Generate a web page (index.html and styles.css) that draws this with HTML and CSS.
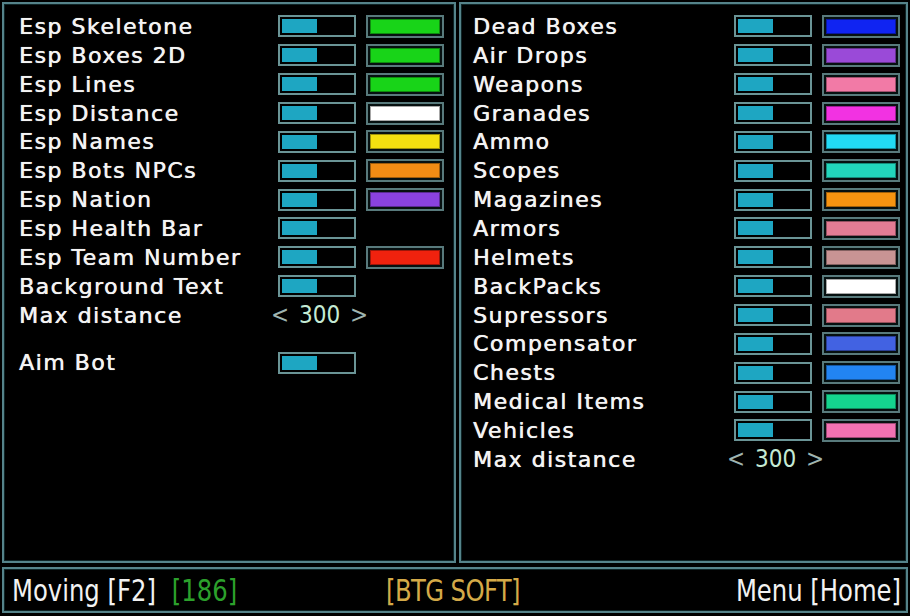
FILE: index.html
```html
<!DOCTYPE html>
<html>
<head>
<meta charset="utf-8">
<link rel="stylesheet" href="styles.css">
</head>
<body>
<div class="menu">
  <div class="panels">
    <section class="panel panel-left">
      <div class="row"><span class="label">Esp Skeletone</span><span class="toggle"><i></i></span><span class="swatch"><i style="background:#18d418"></i></span></div>
      <div class="row"><span class="label">Esp Boxes 2D</span><span class="toggle"><i></i></span><span class="swatch"><i style="background:#18d418"></i></span></div>
      <div class="row"><span class="label">Esp Lines</span><span class="toggle"><i></i></span><span class="swatch"><i style="background:#18d418"></i></span></div>
      <div class="row"><span class="label">Esp Distance</span><span class="toggle"><i></i></span><span class="swatch"><i style="background:#ffffff"></i></span></div>
      <div class="row"><span class="label">Esp Names</span><span class="toggle"><i></i></span><span class="swatch"><i style="background:#f2e010"></i></span></div>
      <div class="row"><span class="label">Esp Bots NPCs</span><span class="toggle"><i></i></span><span class="swatch"><i style="background:#f28c14"></i></span></div>
      <div class="row"><span class="label">Esp Nation</span><span class="toggle"><i></i></span><span class="swatch"><i style="background:#8a42e0"></i></span></div>
      <div class="row"><span class="label">Esp Health Bar</span><span class="toggle"><i></i></span></div>
      <div class="row"><span class="label">Esp Team Number</span><span class="toggle"><i></i></span><span class="swatch"><i style="background:#f0220e"></i></span></div>
      <div class="row"><span class="label">Background Text</span><span class="toggle"><i></i></span></div>
      <div class="row"><span class="label">Max distance</span><span class="range"><span class="arrow">&lt;</span> <span class="num">300</span> <span class="arrow">&gt;</span></span></div>
      <div class="spacer"></div>
      <div class="row"><span class="label">Aim Bot</span><span class="toggle"><i></i></span></div>
    </section>
    <section class="panel panel-right">
      <div class="row"><span class="label">Dead Boxes</span><span class="toggle"><i></i></span><span class="swatch"><i style="background:#1024f2"></i></span></div>
      <div class="row"><span class="label">Air Drops</span><span class="toggle"><i></i></span><span class="swatch"><i style="background:#9a4ad8"></i></span></div>
      <div class="row"><span class="label">Weapons</span><span class="toggle"><i></i></span><span class="swatch"><i style="background:#f27aa6"></i></span></div>
      <div class="row"><span class="label">Granades</span><span class="toggle"><i></i></span><span class="swatch"><i style="background:#f232e2"></i></span></div>
      <div class="row"><span class="label">Ammo</span><span class="toggle"><i></i></span><span class="swatch"><i style="background:#22daf4"></i></span></div>
      <div class="row"><span class="label">Scopes</span><span class="toggle"><i></i></span><span class="swatch"><i style="background:#22d6bc"></i></span></div>
      <div class="row"><span class="label">Magazines</span><span class="toggle"><i></i></span><span class="swatch"><i style="background:#f69410"></i></span></div>
      <div class="row"><span class="label">Armors</span><span class="toggle"><i></i></span><span class="swatch"><i style="background:#e47c94"></i></span></div>
      <div class="row"><span class="label">Helmets</span><span class="toggle"><i></i></span><span class="swatch"><i style="background:#c89494"></i></span></div>
      <div class="row"><span class="label">BackPacks</span><span class="toggle"><i></i></span><span class="swatch"><i style="background:#ffffff"></i></span></div>
      <div class="row"><span class="label">Supressors</span><span class="toggle"><i></i></span><span class="swatch"><i style="background:#e27a8a"></i></span></div>
      <div class="row"><span class="label">Compensator</span><span class="toggle"><i></i></span><span class="swatch"><i style="background:#4262e2"></i></span></div>
      <div class="row"><span class="label">Chests</span><span class="toggle"><i></i></span><span class="swatch"><i style="background:#2284f2"></i></span></div>
      <div class="row"><span class="label">Medical Items</span><span class="toggle"><i></i></span><span class="swatch"><i style="background:#14d48e"></i></span></div>
      <div class="row"><span class="label">Vehicles</span><span class="toggle"><i></i></span><span class="swatch"><i style="background:#f272b2"></i></span></div>
      <div class="row"><span class="label">Max distance</span><span class="range"><span class="arrow">&lt;</span> <span class="num">300</span> <span class="arrow">&gt;</span></span></div>
    </section>
  </div>
  <footer class="footer">
    <div class="foot-left"><span class="foot-text">Moving [F2]</span><span class="foot-count">[186]</span></div>
    <div class="foot-center"><span class="foot-brand">[BTG SOFT]</span></div>
    <div class="foot-right"><span class="foot-text">Menu [Home]</span></div>
  </footer>
</div>
</body>
</html>
```

FILE: styles.css
```css
html, body {
  margin: 0;
  padding: 0;
  background: #000;
}

.menu {
  width: 910px;
  height: 616px;
  box-sizing: border-box;
  padding: 2px 2px 3px 2px;
  display: flex;
  flex-direction: column;
  gap: 4px;
  background: #000;
  font-family: "DejaVu Sans", "Verdana", sans-serif;
}

.panels {
  display: flex;
  gap: 3px;
  height: 561px;
}

.panel {
  box-sizing: border-box;
  border: 2px solid #55838a;
  box-shadow: inset 0 0 0 1px #0e2426;
  padding-top: 8px;
  display: flex;
  flex-direction: column;
}

.panel-left {
  width: 454px;
  padding-left: 15px;
}

.panel-right {
  width: 449px;
  padding-left: 12px;
}

.row {
  height: 28.87px;
  display: flex;
  align-items: center;
}

.label {
  width: 259px;
  flex: none;
  color: #f4f4f4;
  font-size: 22px;
  letter-spacing: 1.5px;
  text-shadow: 0.4px 0 0 rgba(255,255,255,0.85), 0 0 1px rgba(255,255,255,0.5);
  white-space: nowrap;
}

.panel-right .label {
  width: 261px;
}

.toggle {
  box-sizing: border-box;
  width: 78px;
  height: 22px;
  border: 2px solid #6a9496;
  padding: 2px;
  background: #000;
  flex: none;
  display: flex;
}

.toggle i {
  display: block;
  width: 35px;
  height: 100%;
  background: #1ea6c2;
}

.swatch {
  box-sizing: border-box;
  width: 78px;
  height: 23px;
  margin-left: 10px;
  border: 2px solid #587a7c;
  padding: 2px;
  background: #061010;
  flex: none;
  display: flex;
}

.swatch i {
  display: block;
  flex: 1;
  box-shadow: inset 0 0 0 1px rgba(0,0,0,0.35);
}

.range {
  margin-left: -7px;
  font-family: "DejaVu Sans Condensed", "DejaVu Sans", sans-serif;
  font-size: 24px;
  color: #c4ead4;
  white-space: nowrap;
  word-spacing: 3px;
}

.range .arrow {
  color: #9fb4b0;
  font-weight: 300;
}

.spacer {
  height: 19px;
  flex: none;
}

.footer {
  box-sizing: border-box;
  height: 46px;
  border: 2px solid #55838a;
  box-shadow: inset 0 0 0 1px #0e2426;
  display: grid;
  grid-template-columns: 1fr auto 1fr;
  align-items: center;
  padding: 0 5px 0 8px;
  font-family: "DejaVu Sans Condensed", "Liberation Sans Narrow", sans-serif;
  font-size: 27px;
}

.footer span {
  display: inline-block;
  transform: scaleY(1.1);
  white-space: nowrap;
}

.foot-text {
  color: #f2f2f2;
}

.foot-count {
  color: #2ca02c;
  margin-left: 16px;
}

.foot-brand {
  color: #d4aa48;
  letter-spacing: -0.6px;
}

.foot-center {
  padding-right: 7px;
}

.foot-right {
  text-align: right;
}
```
